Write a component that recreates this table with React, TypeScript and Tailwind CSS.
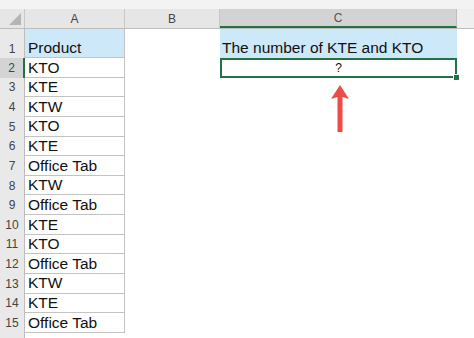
import React from "react";

const products = [
  "KTO", "KTE", "KTW", "KTO", "KTE", "Office Tab", "KTW",
  "Office Tab", "KTE", "KTO", "Office Tab", "KTW", "KTE", "Office Tab",
];

function RowHead({ n, active, tall }: { n?: number; active?: boolean; tall?: boolean }) {
  return (
    <div
      className={`w-[25px] shrink-0 flex justify-center text-[12px] text-[#444] border-r ${
        tall ? "items-end pb-[3px]" : "items-center"
      } ${active ? "bg-[#d4d4d4] border-r-2 border-[#217346]" : "bg-[#e9e9e9] border-[#bdbdbd]"}`}
    >
      {n}
    </div>
  );
}

export default function App() {
  return (
    <div className="relative w-[474px] h-[338px] overflow-hidden bg-white font-['Liberation_Sans',Arial,sans-serif] text-[#111]">
      <div className="h-[9px] bg-[#f3f3f3]" />

      {/* column headers */}
      <div className="flex h-[20px] bg-[#e6e6e6] border-b border-[#bdbdbd] text-[12px] text-[#444]">
        <div className="w-[25px] shrink-0 border-r border-[#c8c8c8] relative">
          <svg className="absolute right-[3px] bottom-[3px]" width="12" height="12" viewBox="0 0 12 12">
            <polygon points="12,0 12,12 0,12" fill="#b5b5b5" />
          </svg>
        </div>
        <div className="w-[100px] shrink-0 flex items-center justify-center border-r border-[#c8c8c8]">A</div>
        <div className="w-[95px] shrink-0 flex items-center justify-center border-r border-[#c8c8c8]">B</div>
        <div className="w-[237px] shrink-0 flex items-center justify-center bg-[#d3d3d3] border-r border-[#bdbdbd] border-b-2 border-b-[#217346] text-[#555]">
          C
        </div>
        <div className="flex-1 bg-[#efefef]" />
      </div>

      {/* row 1 */}
      <div className="flex h-[29px] text-[15.5px] leading-none">
        <RowHead n={1} tall />
        <div className="w-[100px] shrink-0 bg-[#cde8f8] border-r border-b border-[#c3c3c3] flex items-end pl-[3px] pb-[2px]">
          Product
        </div>
        <div className="w-[95px] shrink-0" />
        <div className="w-[237px] shrink-0 bg-[#cde8f8] flex items-end pl-[2px] pb-[3px] whitespace-nowrap">
          The number of KTE and KTO
        </div>
        <div className="flex-1" />
      </div>

      {/* rows 2..15 */}
      {products.map((p, i) => (
        <div key={i} className="flex h-[19.64px] text-[15.5px]">
          <RowHead n={i + 2} active={i === 0} />
          <div className="w-[100px] shrink-0 border-r border-b border-[#c3c3c3] flex items-center pl-[3px] leading-none">
            {p}
          </div>
          <div className="w-[95px] shrink-0" />
          {i === 0 ? (
            <div className="relative w-[237px] shrink-0 border-2 border-[#217346] flex items-center justify-center text-[12px]">
              ?
              <div className="absolute right-[-5px] bottom-[-5px] w-[7px] h-[7px] bg-[#217346] border border-white" />
            </div>
          ) : (
            <div className="w-[237px] shrink-0" />
          )}
          <div className="flex-1" />
        </div>
      ))}
      <div className="flex h-[20px]">
        <RowHead />
      </div>

      {/* red arrow */}
      <svg className="absolute left-[328px] top-[84px]" width="24" height="50" viewBox="0 0 24 50">
        <path d="M12 1 L21 15 L14.5 13 L14.5 48 L9.5 48 L9.5 13 L3 15 Z" fill="#ee4a46" />
      </svg>
    </div>
  );
}
